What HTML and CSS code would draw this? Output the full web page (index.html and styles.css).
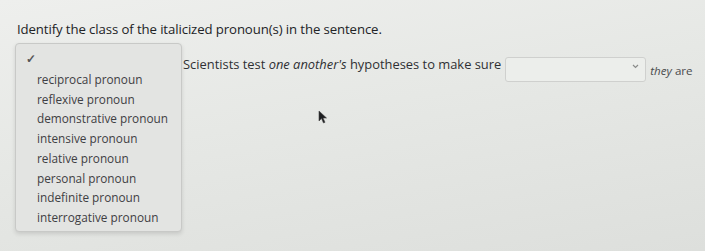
FILE: index.html
```html
<!DOCTYPE html>
<html>
<head>
<meta charset="utf-8">
<link rel="stylesheet" href="styles.css">
</head>
<body>
<div class="page">
  <p class="prompt">Identify the class of the italicized pronoun(s) in the sentence.</p>
  <div class="row">
    <div class="menu">
      <div class="check">&#10003;</div>
      <ul class="options">
        <li>reciprocal pronoun</li>
        <li>reflexive pronoun</li>
        <li>demonstrative pronoun</li>
        <li>intensive pronoun</li>
        <li>relative pronoun</li>
        <li>personal pronoun</li>
        <li>indefinite pronoun</li>
        <li>interrogative pronoun</li>
      </ul>
    </div>
    <div class="sentence">
      <span class="lead">Scientists test <em>one another's</em> hypotheses to make sure</span>
      <span class="select"><svg class="chev" width="7" height="5" viewBox="0 0 7 5"><path d="M1 1 L3.5 3.5 L6 1" fill="none" stroke="#8a8c8a" stroke-width="1.2"/></svg></span>
      <span class="tail"><em>they</em> are</span>
    </div>
  </div>
  <svg class="cursor" width="10" height="14" viewBox="0 0 10 14"><path d="M1 1 L1 11 L3.5 8.5 L5.5 13 L7 12.3 L5 8 L8.5 8 Z" fill="#1e1f22" stroke="#444" stroke-width="0.6"/></svg>
</div>
</body>
</html>
```
FILE: styles.css
```css
html, body {
  margin: 0;
  padding: 0;
}
body {
  width: 705px;
  height: 251px;
  overflow: hidden;
  background: linear-gradient(170deg, #eeefed 0%, #e6e8e5 45%, #dddfdc 100%);
  font-family: "Open Sans", "Liberation Sans", Arial, sans-serif;
  color: #3a3b3c;
}
.page {
  position: relative;
  height: 251px;
  padding: 0 0 0 15px;
  box-sizing: border-box;
}
.prompt {
  margin: 0;
  padding: 21px 0 0 2px;
  font-size: 13.2px;
  line-height: 17px;
  color: #222326;
  letter-spacing: -0.1px;
}
.row {
  display: flex;
  align-items: flex-start;
  margin-top: 5px;
}
.menu {
  width: 167px;
  height: 189px;
  box-sizing: border-box;
  background: #e3e4e2;
  border: 1px solid #c8c9c7;
  border-radius: 4px;
  box-shadow: 0 2px 4px rgba(0,0,0,0.12);
  padding: 8px 0 0 0;
}
.check {
  font-size: 12px;
  line-height: 14px;
  font-weight: 700;
  color: #555;
  padding-left: 10px;
}
.options {
  list-style: none;
  margin: 4px 0 0 0;
  padding: 0 0 0 21px;
}
.options li {
  font-size: 11.8px;
  line-height: 19.7px;
  color: #3f4043;
}
.sentence {
  display: flex;
  align-items: flex-start;
  margin-top: 12px;
  margin-left: 1px;
  font-size: 12.9px;
  color: #2f3033;
}
.lead {
  line-height: 18px;
}
.lead em {
  font-style: italic;
}
.select {
  display: flex;
  align-items: flex-start;
  justify-content: flex-end;
  width: 141px;
  height: 25px;
  box-sizing: border-box;
  margin: 2px 0 0 4px;
  border: 1px solid #cfd0ce;
  border-radius: 3px;
  background: #eceeeb;
  padding: 6px 6px 0 0;
}
.tail {
  margin: 9px 0 0 4px;
  font-size: 11.6px;
  line-height: 14px;
  color: #4a4b4d;
}
.cursor {
  position: absolute;
  left: 318px;
  top: 110px;
}
```
